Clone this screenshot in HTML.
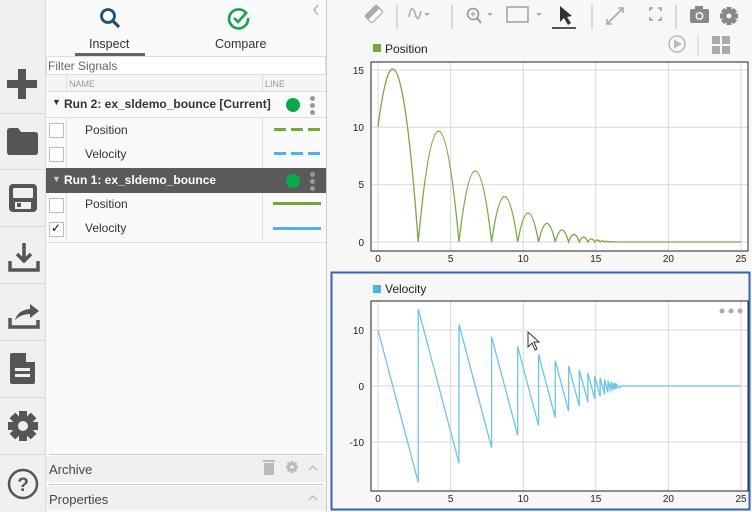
<!DOCTYPE html>
<html><head><meta charset="utf-8"><style>
*{box-sizing:border-box;margin:0;padding:0}
body{width:752px;height:512px;overflow:hidden;background:#f5f5f5;font-family:"Liberation Sans",sans-serif;position:relative;font-size:12px;color:#333}
.abs{position:absolute}
.side{left:0;top:0;width:46px;height:512px;background:#f0f0f0;border-right:1px solid #ddd}
.sep{position:absolute;left:0;width:45px;height:1px;background:#d8d8d8}
.panel{left:46px;top:0;width:281px;height:512px;background:#fafafa;border-right:1px solid #ccc}
.row{position:absolute;left:0;width:280px;font-size:12px}
.cb{position:absolute;left:3px;width:15px;height:15px;border:1px solid #bbb;background:#fff}
.t{position:absolute;white-space:nowrap}
</style></head><body>

<div class="abs side">
  <svg class="abs" style="left:7px;top:69px" width="30" height="30"><rect x="11" y="0" width="8" height="30" fill="#555"/><rect x="0" y="11" width="30" height="8" fill="#555"/></svg>
  <div class="sep" style="top:113px"></div>
  <svg class="abs" style="left:7px;top:128px" width="31" height="27"><path d="M0 3 Q0 0 3 0 H11 L14 4 H28 Q31 4 31 7 V24 Q31 27 28 27 H3 Q0 27 0 24Z" fill="#555"/></svg>
  <div class="sep" style="top:169px"></div>
  <svg class="abs" style="left:9px;top:184px" width="28" height="28"><rect x="0" y="0" width="28" height="28" rx="4" fill="#555"/><rect x="4" y="4" width="20" height="10" rx="1" fill="#f0f0f0"/><rect x="6" y="18" width="16" height="7" fill="#f0f0f0"/><rect x="8" y="19" width="4" height="4" fill="#555"/></svg>
  <div class="sep" style="top:226px"></div>
  <svg class="abs" style="left:8px;top:241px" width="32" height="32"><path d="M16 2 V20 M9 13 L16 20 L23 13" stroke="#555" stroke-width="3.5" fill="none"/><path d="M2 20 V29 H30 V20" stroke="#555" stroke-width="3.5" fill="none"/></svg>
  <div class="sep" style="top:283px"></div>
  <svg class="abs" style="left:8px;top:298px" width="32" height="32"><path d="M7 22 Q10 12 22 11 V6 L31 13 L22 20 V16 Q13 16 7 22Z" fill="#555"/><path d="M2 20 V29 H30 V22" stroke="#555" stroke-width="3.5" fill="none"/></svg>
  <div class="sep" style="top:340px"></div>
  <svg class="abs" style="left:10px;top:353px" width="26" height="32"><path d="M2 0 H16 L25 9 V29 Q25 31 23 31 H2 Q0 31 0 29 V2 Q0 0 2 0Z" fill="#555"/><path d="M16 0 V9 H25" fill="#f0f0f0"/><rect x="5" y="15" width="15" height="3" fill="#f0f0f0"/><rect x="5" y="21" width="15" height="3" fill="#f0f0f0"/></svg>
  <div class="sep" style="top:397px"></div>
  <svg class="abs" style="left:8px;top:411px" width="30" height="30" viewBox="-15 -15 30 30"><g fill="#555"><circle r="10"/><rect x="-4" y="-15" width="8" height="30"/><rect x="-4" y="-15" width="8" height="30" transform="rotate(45)"/><rect x="-4" y="-15" width="8" height="30" transform="rotate(90)"/><rect x="-4" y="-15" width="8" height="30" transform="rotate(135)"/></g><circle r="5" fill="#f0f0f0"/></svg>
  <div class="sep" style="top:454px"></div>
  <svg class="abs" style="left:7px;top:468px" width="32" height="32"><circle cx="16" cy="16" r="14" stroke="#555" stroke-width="2.5" fill="none"/><text x="16" y="23" text-anchor="middle" font-family="Liberation Sans" font-size="19" font-weight="bold" fill="#555">?</text></svg>
</div>

<div class="abs panel">
  <svg class="abs" style="left:266px;top:4px" width="8" height="12"><path d="M6 1 L2 6 L6 11" stroke="#aaa" stroke-width="1.3" fill="none"/></svg>
  <svg class="abs" style="left:53px;top:7px" width="24" height="24"><circle cx="9" cy="9" r="6.5" stroke="#1f4e79" stroke-width="2.8" fill="none"/><path d="M13.5 13.5 L20 20" stroke="#1f4e79" stroke-width="3.2"/></svg>
  <div class="t" style="left:43px;top:37px;font-size:12.5px;color:#333">Inspect</div>
  <div class="abs" style="left:29px;top:53px;width:70px;height:3px;background:#666"></div>
  <svg class="abs" style="left:181px;top:7px" width="24" height="24"><path d="M19 6 A9.5 9.5 0 1 0 21 11" stroke="#1aa052" stroke-width="2.6" fill="none"/><path d="M7 11 L11 15 L20 5" stroke="#1aa052" stroke-width="2.6" fill="none"/></svg>
  <div class="t" style="left:169px;top:37px;font-size:12.5px;color:#333">Compare</div>
  <div class="abs" style="left:0;top:56px;width:280px;height:19px;background:#fff;border:1px solid #ddd"></div>
  <div class="t" style="left:2px;top:59px;color:#666;font-size:12px">Filter Signals</div>
  <div class="row" style="top:75px;height:17px;background:#f5f5f5;border-bottom:1px solid #ddd">
    <div class="t" style="left:23px;top:4px;font-size:9px;color:#999">NAME</div>
    <div class="t" style="left:219px;top:4px;font-size:9px;color:#999">LINE</div>
    <div class="abs" style="left:216px;top:0;width:1px;height:17px;background:#ddd"></div>
    <div class="abs" style="left:20px;top:0;width:1px;height:17px;background:#ddd"></div>
  </div>
  <div class="row" style="top:92px;height:26px;border-bottom:1px solid #ddd;background:#fafafa">
    <div class="t" style="left:6px;top:5px;font-size:9px">&#9660;</div>
    <div class="t" style="left:18px;top:5px;font-weight:bold;font-size:12px;color:#333">Run 2: ex_sldemo_bounce [Current]</div>
    <div class="abs" style="left:240px;top:6px;width:14px;height:14px;border-radius:50%;background:#0ca84a"></div>
    <div class="abs" style="left:264px;top:4px;width:5px;height:5px;border-radius:50%;background:#999;box-shadow:0 7px 0 #999,0 14px 0 #999"></div>
  </div>
  <div class="abs" style="left:20px;top:118px;width:1px;height:50px;background:#ddd"></div>
  <div class="abs" style="left:216px;top:118px;width:1px;height:50px;background:#ddd"></div>
  <div class="row" style="top:118px;height:24px"><div class="cb" style="top:5px"></div><div class="t" style="left:39px;top:5px">Position</div>
    <div class="abs" style="left:228px;top:10px;width:46px;height:3px;background:repeating-linear-gradient(90deg,#77a73a 0 12px,transparent 12px 17px)"></div></div>
  <div class="row" style="top:142px;height:24px"><div class="cb" style="top:5px"></div><div class="t" style="left:39px;top:5px">Velocity</div>
    <div class="abs" style="left:228px;top:10px;width:46px;height:3px;background:repeating-linear-gradient(90deg,#4db4e4 0 12px,transparent 12px 17px)"></div></div>
  <div class="row" style="top:168px;height:25px;background:#5a5a5a">
    <div class="t" style="left:6px;top:6px;font-size:9px;color:#ccc">&#9660;</div>
    <div class="t" style="left:18px;top:5px;font-weight:bold;font-size:12px;color:#fff">Run 1: ex_sldemo_bounce</div>
    <div class="abs" style="left:240px;top:6px;width:14px;height:14px;border-radius:50%;background:#0ca84a"></div>
    <div class="abs" style="left:264px;top:4px;width:5px;height:5px;border-radius:50%;background:#999;box-shadow:0 7px 0 #999,0 14px 0 #999"></div>
  </div>
  <div class="abs" style="left:20px;top:193px;width:1px;height:48px;background:#ddd"></div>
  <div class="abs" style="left:216px;top:193px;width:1px;height:48px;background:#ddd"></div>
  <div class="row" style="top:193px;height:24px"><div class="cb" style="top:5px"></div><div class="t" style="left:39px;top:4px">Position</div>
    <div class="abs" style="left:227px;top:9px;width:48px;height:3px;background:#77a73a"></div></div>
  <div class="row" style="top:217px;height:24px"><div class="cb" style="top:5px"></div><div class="t" style="left:5px;top:4px;font-size:12px;color:#000">&#10003;</div><div class="t" style="left:39px;top:4px">Velocity</div>
    <div class="abs" style="left:227px;top:10px;width:48px;height:3px;background:#4db4e4"></div></div>
  <div class="abs" style="left:0;top:242px;width:280px;height:1px;background:#ddd"></div>

  <div class="abs" style="left:3px;top:454px;width:274px;height:1px;background:#ccc"></div>
  <div class="abs" style="left:0;top:456px;width:280px;height:26px;background:#f0f0f0"></div>
  <div class="t" style="left:3px;top:462px;font-size:13px;color:#444">Archive</div>
  <svg class="abs" style="left:217px;top:460px" width="12" height="15"><rect x="1" y="3" width="10" height="12" fill="#bbb"/><rect x="0" y="0" width="12" height="2" fill="#bbb"/></svg>
  <svg class="abs" style="left:240px;top:461px" width="12" height="12" viewBox="-6 -6 12 12"><g fill="#bbb"><circle r="4"/><rect x="-1.5" y="-6" width="3" height="12"/><rect x="-1.5" y="-6" width="3" height="12" transform="rotate(45)"/><rect x="-1.5" y="-6" width="3" height="12" transform="rotate(90)"/><rect x="-1.5" y="-6" width="3" height="12" transform="rotate(135)"/></g><circle r="1.8" fill="#f0f0f0"/></svg>
  <svg class="abs" style="left:262px;top:464px" width="10" height="7"><path d="M1 6 L5 2 L9 6" stroke="#bbb" stroke-width="1.3" fill="none"/></svg>
  <div class="abs" style="left:3px;top:484px;width:274px;height:1px;background:#ccc"></div>
  <div class="abs" style="left:0;top:486px;width:280px;height:24px;background:#f0f0f0"></div>
  <div class="t" style="left:3px;top:492px;font-size:13px;color:#444">Properties</div>
  <svg class="abs" style="left:262px;top:494px" width="10" height="7"><path d="M1 6 L5 2 L9 6" stroke="#bbb" stroke-width="1.3" fill="none"/></svg>
</div>

<svg class="abs" style="left:327px;top:0" width="425" height="512" font-family="Liberation Sans">
  <rect x="0" y="0" width="425" height="512" fill="#f7f7f7"/>
  <g transform="translate(-327,0)">
    <g transform="translate(374,14) rotate(-45)"><rect x="-8" y="-5" width="16" height="10" rx="1.5" fill="#fff" stroke="#aaa" stroke-width="1.2"/><rect x="-8" y="-5" width="16" height="5" fill="#aaa"/></g>
    <line x1="397" y1="5" x2="397" y2="29" stroke="#bbb"/>
    <path d="M409 17 Q411 3 415 13 Q418 25 421 11" stroke="#aaa" stroke-width="1.6" fill="none"/>
    <path d="M424 13 l3 3 l3 -3z" fill="#aaa"/>
    <line x1="452" y1="5" x2="452" y2="29" stroke="#bbb"/>
    <circle cx="473" cy="14" r="5.5" stroke="#999" stroke-width="1.6" fill="none"/><path d="M477 18 L481 23" stroke="#999" stroke-width="2"/><path d="M470.5 14 h5 M473 11.5 v5" stroke="#999"/>
    <path d="M487 13 l3 3 l3 -3z" fill="#aaa"/>
    <rect x="507" y="7" width="21" height="15" stroke="#999" stroke-width="1.4" fill="none"/>
    <path d="M536 13 l3 3 l3 -3z" fill="#aaa"/>
    <path d="M560 6 L560 22 L564 18 L568 25 L571 23 L567 17 L572 16 Z" fill="#333"/>
    <line x1="552" y1="28" x2="576" y2="28" stroke="#555" stroke-width="2"/>
    <line x1="592" y1="5" x2="592" y2="29" stroke="#bbb"/>
    <path d="M607 24 L623 8 M618 8 h5 v5 M607 19 v5 h5" stroke="#aaa" stroke-width="1.6" fill="none"/>
    <path d="M650 11 v-3 h3 M658 8 h3 v3 M661 17 v3 h-3 M653 20 h-3 v-3" stroke="#999" stroke-width="1.6" fill="none"/>
    <line x1="676" y1="5" x2="676" y2="29" stroke="#bbb"/>
    <rect x="690" y="9" width="19" height="14" rx="2" fill="#888"/><rect x="695" y="6" width="8" height="4" fill="#888"/><circle cx="699.5" cy="16" r="4" fill="#f7f7f7"/><circle cx="699.5" cy="16" r="2.5" fill="#888"/>
    <g transform="translate(729,16)" fill="#888"><circle r="6"/><rect x="-2.5" y="-9" width="5" height="18"/><rect x="-2.5" y="-9" width="5" height="18" transform="rotate(45)"/><rect x="-2.5" y="-9" width="5" height="18" transform="rotate(90)"/><rect x="-2.5" y="-9" width="5" height="18" transform="rotate(135)"/><circle r="2.5" fill="#f7f7f7"/></g>
    <circle cx="677" cy="44" r="8" stroke="#bbb" stroke-width="1.6" fill="none"/><path d="M674 39.5 L682 44 L674 48.5Z" fill="#bbb"/>
    <line x1="698" y1="34" x2="698" y2="56" stroke="#ccc"/>
    <rect x="712" y="36" width="8" height="8" fill="#aaa"/><rect x="722" y="36" width="8" height="8" fill="#aaa"/><rect x="712" y="46" width="8" height="8" fill="#aaa"/><rect x="722" y="46" width="8" height="8" fill="#aaa"/>

    <rect x="373" y="44" width="8" height="8" fill="#77a73a"/>
    <text x="385" y="53" font-size="12" fill="#222">Position</text>
    <rect x="371" y="62" width="377" height="189" fill="#fff"/>
    <g stroke="#d8d8d8" stroke-width="1">
      <line x1="378" y1="62" x2="378" y2="251"/><line x1="450.6" y1="62" x2="450.6" y2="251"/><line x1="523.2" y1="62" x2="523.2" y2="251"/><line x1="595.8" y1="62" x2="595.8" y2="251"/><line x1="668.4" y1="62" x2="668.4" y2="251"/><line x1="741" y1="62" x2="741" y2="251"/>
      <line x1="371" y1="70" x2="748" y2="70"/><line x1="371" y1="127.3" x2="748" y2="127.3"/><line x1="371" y1="184.7" x2="748" y2="184.7"/><line x1="371" y1="242" x2="748" y2="242"/>
    </g>
    <rect x="371" y="62" width="377" height="189" fill="none" stroke="#222" stroke-width="1"/>
    <g font-size="10" fill="#222" text-anchor="end"><text x="364" y="74">15</text><text x="364" y="131">10</text><text x="364" y="188">5</text><text x="364" y="246">0</text></g>
    <g font-size="10" fill="#222" text-anchor="middle"><text x="378" y="262">0</text><text x="450.6" y="262">5</text><text x="523.2" y="262">10</text><text x="595.8" y="262">15</text><text x="668.4" y="262">20</text><text x="741" y="262">25</text></g>
    <g transform="translate(378,242) scale(14.52,-11.47)">
      <path vector-effect="non-scaling-stroke" stroke="#80a846" stroke-width="1.3" fill="none" d="M0 10 Q1.385 23.85 2.77 0 Q4.173 19.32 5.577 0 Q6.7 12.38 7.823 0 Q8.72 7.92 9.62 0 Q10.34 5.06 11.057 0 Q11.63 3.24 12.207 0 Q12.67 2.08 13.127 0 Q13.5 1.32 13.863 0 Q14.16 .86 14.452 0 Q14.69 .54 14.923 0 Q15.11 .34 15.3 0 Q15.45 .22 15.6 0 Q15.72 .14 15.84 0 Q15.94 .09 16.04 0 Q16.11 .06 16.19 0 Q16.25 .04 16.31 0 Q16.36 .03 16.41 0 L16.8 0 L25 0"/>
    </g>

    <rect x="331.5" y="272.5" width="418" height="237" fill="#f7f7f7" stroke="#3a62b0" stroke-width="2"/>
    <rect x="373" y="285" width="8" height="8" fill="#4db4e4"/>
    <text x="385" y="293" font-size="12" fill="#222">Velocity</text>
    <rect x="371" y="301" width="377" height="190" fill="#fff"/>
    <g stroke="#d8d8d8" stroke-width="1">
      <line x1="378" y1="301" x2="378" y2="491"/><line x1="450.6" y1="301" x2="450.6" y2="491"/><line x1="523.2" y1="301" x2="523.2" y2="491"/><line x1="595.8" y1="301" x2="595.8" y2="491"/><line x1="668.4" y1="301" x2="668.4" y2="491"/><line x1="741" y1="301" x2="741" y2="491"/>
      <line x1="371" y1="330" x2="748" y2="330"/><line x1="371" y1="386" x2="748" y2="386"/><line x1="371" y1="442" x2="748" y2="442"/>
    </g>
    <rect x="371" y="301" width="377" height="190" fill="none" stroke="#222" stroke-width="1"/>
    <circle cx="722" cy="311" r="2.5" fill="#aaa"/><circle cx="731" cy="311" r="2.5" fill="#aaa"/><circle cx="740" cy="311" r="2.5" fill="#aaa"/>
    <g font-size="10" fill="#222" text-anchor="end"><text x="364" y="334">10</text><text x="364" y="390">0</text><text x="364" y="446">-10</text></g>
    <g font-size="10" fill="#222" text-anchor="middle"><text x="378" y="502">0</text><text x="450.6" y="502">5</text><text x="523.2" y="502">10</text><text x="595.8" y="502">15</text><text x="668.4" y="502">20</text><text x="741" y="502">25</text></g>
    <g transform="translate(378,386) scale(14.52,-5.6)">
      <path vector-effect="non-scaling-stroke" stroke="#6ec4e8" stroke-width="1.3" fill="none" d="M0 10 L2.77 -17.2 L2.77 13.77 L5.577 -13.77 L5.577 11.02 L7.823 -11.02 L7.823 8.81 L9.62 -8.81 L9.62 7.05 L11.057 -7.05 L11.057 5.64 L12.207 -5.64 L12.207 4.51 L13.127 -4.51 L13.127 3.61 L13.863 -3.61 L13.863 2.89 L14.452 -2.89 L14.452 2.31 L14.923 -2.31 L14.923 1.85 L15.3 -1.85 L15.3 1.48 L15.6 -1.48 L15.6 1.18 L15.84 -1.18 L15.84 .95 L16.04 -.95 L16.04 .76 L16.19 -.76 L16.19 .6 L16.31 -.6 L16.31 .48 L16.41 -.48 L16.41 .3 L16.6 -.3 L16.8 0 L25 0"/>
    </g>
    <path d="M528 332 L528 347 L532 343 L535 350 L537 349 L534 342 L539 342 Z" fill="#fff" stroke="#333" stroke-width="1"/>
  </g>
</svg>
</body></html>
